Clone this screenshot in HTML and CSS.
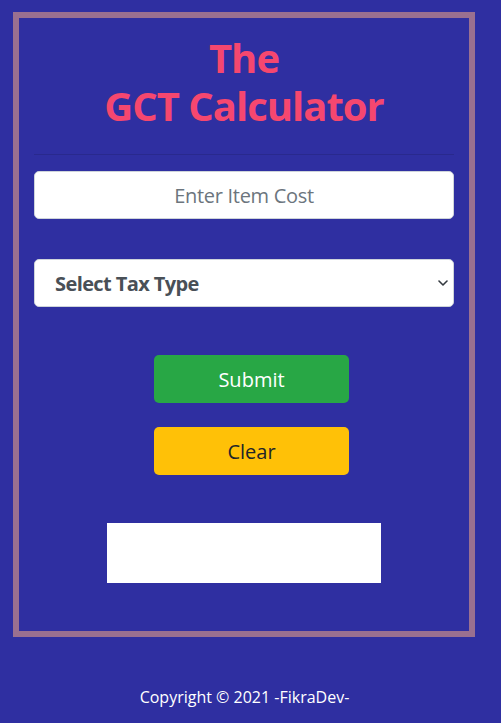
FILE: index.html
```html
<!DOCTYPE html>
<html lang="en">
<head>
<meta charset="utf-8">
<title>The GCT Calculator</title>
<link rel="stylesheet" href="styles.css">
</head>
<body>
<main class="card">
  <h1 class="title">The<br>GCT Calculator</h1>
  <hr class="rule">
  <input class="field cost" type="text" placeholder="Enter Item Cost">
  <div class="select-wrap">
    <select class="field tax">
      <option>Select Tax Type</option>
    </select>
    <svg class="chevron" width="10" height="6" viewBox="0 0 10 6"><path d="M1 1l4 4 4-4" fill="none" stroke="#343a40" stroke-width="1.6" stroke-linecap="round" stroke-linejoin="round"/></svg>
  </div>
  <div class="actions">
    <button class="btn submit" type="button">Submit</button>
    <button class="btn clear" type="button">Clear</button>
  </div>
  <div class="result"></div>
</main>
<footer class="footer">Copyright © 2021 -FikraDev-</footer>
</body>
</html>
```
FILE: styles.css
```css
html, body {
  margin: 0;
  padding: 0;
}
body {
  background: #2f2fa1;
  font-family: "Open Sans", "Noto Sans", sans-serif;
  color: #212529;
  min-height: 723px;
}
.card {
  margin: 12px 26px 0 13px;
  border: 6px solid #9a7090;
  padding: 0 15px 48px;
  display: flex;
  flex-direction: column;
}
.title {
  margin: 0;
  padding-top: 16px;
  font-size: 40px;
  line-height: 48px;
  font-weight: 700;
  letter-spacing: -1px;
  color: #f5476f;
  text-align: center;
}
.rule {
  margin: 24px 0 16px;
  border: 0;
  border-top: 1px solid rgba(0, 0, 0, 0.12);
  height: 0;
}
.field {
  box-sizing: border-box;
  width: 100%;
  height: 48px;
  margin: 0;
  border: 1px solid #ced4da;
  border-radius: 5px;
  background: #fff;
  font-family: inherit;
  font-size: 20px;
  color: #495057;
  outline: none;
}
.cost {
  text-align: center;
  padding: 0 16px;
  letter-spacing: -0.3px;
}
.cost::placeholder {
  color: #6c757d;
}
.select-wrap {
  position: relative;
  margin-top: 40px;
}
.tax {
  -webkit-appearance: none;
  appearance: none;
  padding: 0 16px 0 20px;
  font-weight: 700;
  letter-spacing: -0.6px;
}
.chevron {
  position: absolute;
  right: 6px;
  top: 21px;
}
.actions {
  margin-top: 48px;
  margin-left: 15px;
  display: flex;
  flex-direction: column;
  align-items: center;
  gap: 24px;
}
.btn {
  box-sizing: border-box;
  width: 195px;
  height: 48px;
  border: 0;
  border-radius: 5px;
  font-family: inherit;
  font-size: 20px;
  cursor: pointer;
}
.submit {
  background: #28a745;
  color: #fff;
}
.clear {
  background: #ffc107;
  color: #212529;
}
.result {
  align-self: center;
  width: 274px;
  height: 60px;
  margin-top: 48px;
  background: #fff;
}
.footer {
  margin-top: 48px;
  text-align: center;
  font-size: 16px;
  line-height: 24px;
  color: #fff;
  padding-right: 12px;
}
```
